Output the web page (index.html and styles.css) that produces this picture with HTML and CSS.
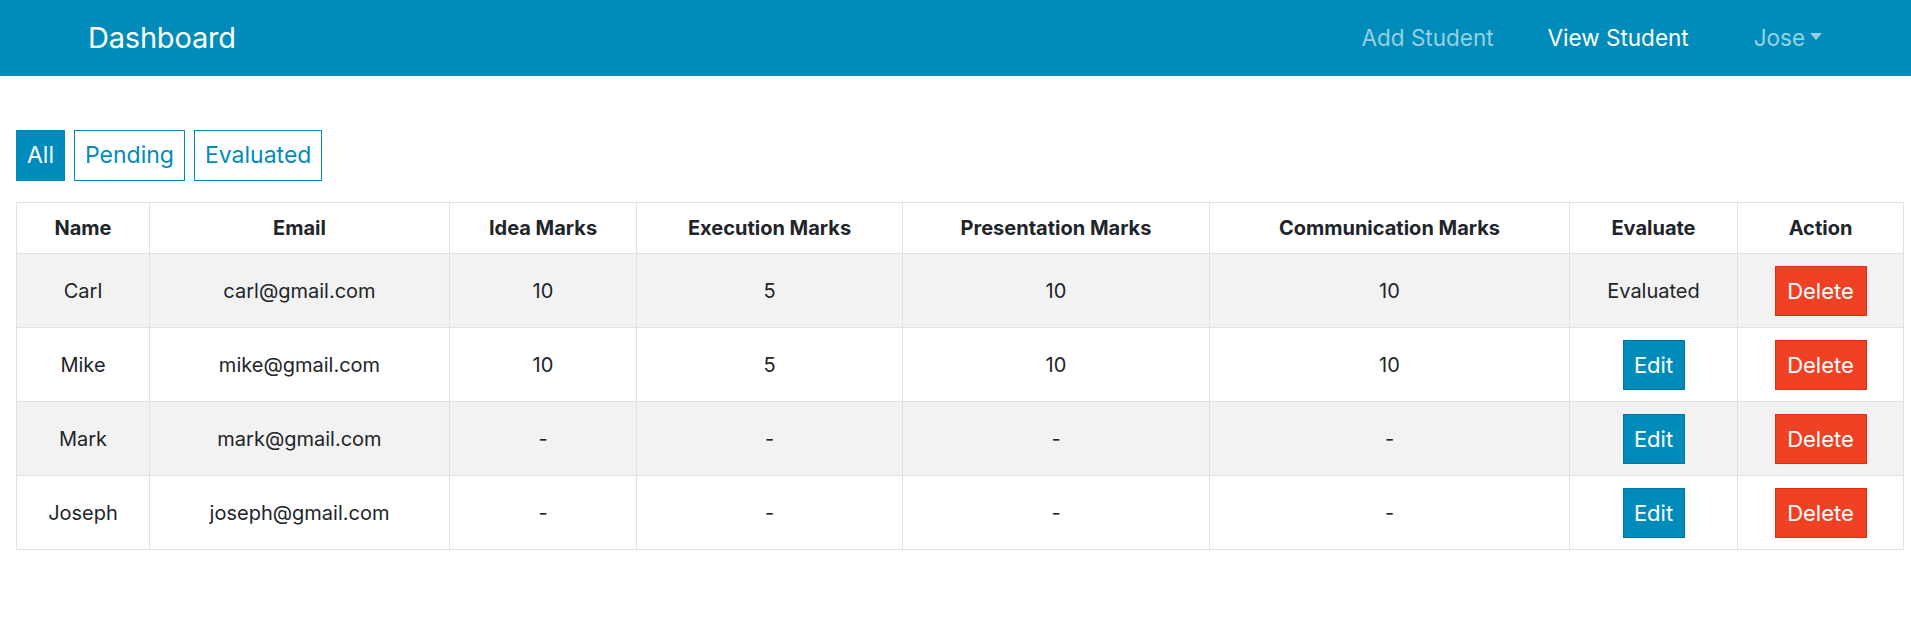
FILE: index.html
```html
<!DOCTYPE html>
<html lang="en">
<head>
<meta charset="utf-8">
<title>Dashboard</title>
<link rel="stylesheet" href="styles.css">
</head>
<body>
<nav class="navbar">
  <a class="brand" href="#">Dashboard</a>
  <ul class="nav">
    <li><a class="nav-link" href="#">Add Student</a></li>
    <li><a class="nav-link active" href="#">View Student</a></li>
    <li class="dropdown"><a class="nav-link" href="#">Jose<span class="caret"></span></a></li>
  </ul>
</nav>
<main class="content">
  <div class="filters">
    <button class="filter active">All</button>
    <button class="filter">Pending</button>
    <button class="filter">Evaluated</button>
  </div>
  <table class="students">
    <colgroup>
      <col class="c-name"><col class="c-email"><col class="c-idea"><col class="c-exec">
      <col class="c-pres"><col class="c-comm"><col class="c-eval"><col class="c-action">
    </colgroup>
    <thead>
      <tr>
        <th>Name</th><th>Email</th><th>Idea Marks</th><th>Execution Marks</th>
        <th>Presentation Marks</th><th>Communication Marks</th><th>Evaluate</th><th>Action</th>
      </tr>
    </thead>
    <tbody>
      <tr>
        <td>Carl</td><td>carl@gmail.com</td><td>10</td><td>5</td><td>10</td><td>10</td>
        <td>Evaluated</td><td><button class="btn btn-delete">Delete</button></td>
      </tr>
      <tr>
        <td>Mike</td><td>mike@gmail.com</td><td>10</td><td>5</td><td>10</td><td>10</td>
        <td><button class="btn btn-edit">Edit</button></td><td><button class="btn btn-delete">Delete</button></td>
      </tr>
      <tr>
        <td>Mark</td><td>mark@gmail.com</td><td>-</td><td>-</td><td>-</td><td>-</td>
        <td><button class="btn btn-edit">Edit</button></td><td><button class="btn btn-delete">Delete</button></td>
      </tr>
      <tr>
        <td>Joseph</td><td>joseph@gmail.com</td><td>-</td><td>-</td><td>-</td><td>-</td>
        <td><button class="btn btn-edit">Edit</button></td><td><button class="btn btn-delete">Delete</button></td>
      </tr>
    </tbody>
  </table>
</main>
</body>
</html>
```
FILE: styles.css
```css
* { box-sizing: border-box; }
html, body {
  margin: 0;
  padding: 0;
  background: #fff;
  font-family: Inter, "Open Sans", "Liberation Sans", sans-serif;
  color: #212529;
  font-size: 20px;
}
.navbar {
  height: 76px;
  background: #008cba;
  display: flex;
  align-items: center;
  justify-content: space-between;
  padding: 0 62px 0 88px;
}
.brand {
  color: #fff;
  text-decoration: none;
  font-size: 29px;
  font-weight: 400;
  line-height: 40px;
  letter-spacing: -0.2px;
}
.nav {
  list-style: none;
  margin: 0;
  padding: 0;
  display: flex;
  align-items: center;
}
.nav-link {
  display: flex;
  align-items: center;
  padding: 0 27px;
  font-size: 22.5px;
  line-height: 36px;
  color: rgba(255, 255, 255, 0.6);
  text-decoration: none;
}
.nav-link.active { color: #fff; }
.dropdown { margin-left: 11px; }
.caret {
  display: inline-block;
  margin-left: 5px;
  margin-top: -3px;
  width: 0;
  height: 0;
  border-left: 6px solid transparent;
  border-right: 6px solid transparent;
  border-top: 7px solid rgba(255, 255, 255, 0.6);
}
.content {
  padding: 54px 8px 0 16px;
}
.filters {
  display: flex;
  gap: 9px;
  margin-bottom: 21px;
}
.filter {
  font-family: inherit;
  font-size: 23px;
  line-height: 49px;
  padding: 0 10px;
  height: 51px;
  border: 1px solid #008cba;
  background: #fff;
  color: #008cba;
  border-radius: 0;
  cursor: pointer;
}
.filter.active {
  background: #008cba;
  color: #fff;
}
.students {
  width: 100%;
  border-collapse: collapse;
  table-layout: fixed;
}
.c-name { width: 133px; }
.c-email { width: 300px; }
.c-idea { width: 187px; }
.c-exec { width: 266px; }
.c-pres { width: 307px; }
.c-comm { width: 360px; }
.c-eval { width: 168px; }
.c-action { width: 166px; }
.students th, .students td {
  border: 1px solid #dee2e6;
  text-align: center;
  vertical-align: middle;
  line-height: 30px;
}
.students th {
  font-weight: 700;
  font-size: 20px;
  padding: 10px 8px;
  height: 51px;
}
.students td {
  padding: 11px 8px;
  height: 74px;
  font-size: 20px;
}
.students tbody tr:nth-child(odd) { background: #f2f2f2; }
.btn {
  font-family: inherit;
  font-size: 22px;
  line-height: 32px;
  padding: 8px 0;
  border: 1px solid transparent;
  border-radius: 0;
  color: #fff;
  cursor: pointer;
  vertical-align: middle;
}
.btn-edit {
  background: #008cba;
  border-color: #0079a1;
  width: 62px;
}
.btn-delete {
  background: #f04124;
  border-color: #de2d0f;
  width: 92px;
}
```
